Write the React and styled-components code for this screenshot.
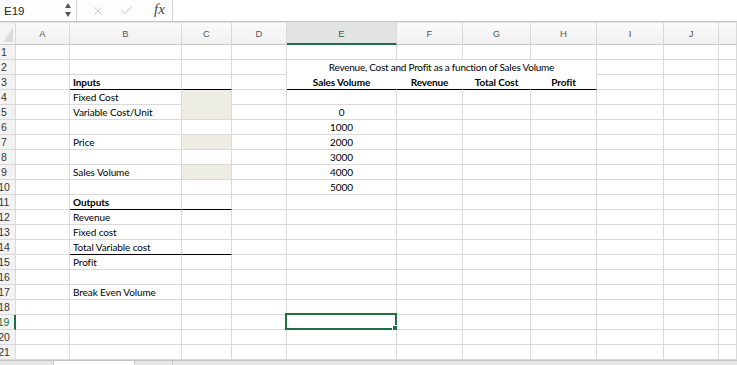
import React from "react";
import styled, { createGlobalStyle, css } from "styled-components";
import { X, Check } from "lucide-react";

const GREEN = "#1d7044";
const GRID = "#d9d9d9";
const FILL = "#eeede3";

const GlobalStyle = createGlobalStyle`
  html, body {
    margin: 0;
    padding: 0;
    background: #fff;
    overflow: hidden;
  }
  body {
    font-family: "Lato", "Liberation Sans", sans-serif;
  }
`;

const Window = styled.div`
  width: 737px;
  height: 365px;
  display: flex;
  flex-direction: column;
  overflow: hidden;
`;

// formula bar
const FormulaBar = styled.div`
  height: 21px;
  display: flex;
  align-items: stretch;
  background: #fdfdfd;
  border-bottom: 1px solid #c4c4c4;
  box-shadow: 0 1px 0 #e4e4e4;
  margin-bottom: 1px;
`;

const NameBox = styled.div`
  width: 77px;
  display: flex;
  align-items: center;
  justify-content: space-between;
  padding: 0 5px 0 4px;
  box-sizing: border-box;
  font-family: "Liberation Sans", sans-serif;
  font-size: 11.5px;
  color: #222;
  border-right: 1px solid #d4d4d4;
`;

const Spinner = styled.div`
  display: flex;
  flex-direction: column;
  gap: 4px;
  margin-top: -1px;
`;

const Arrow = styled.span`
  width: 0;
  height: 0;
  border-left: 3px solid transparent;
  border-right: 3px solid transparent;
  ${(p) =>
    p.$down
      ? css`border-top: 5px solid #555;`
      : css`border-bottom: 5px solid #555;`}
`;

const Tools = styled.div`
  width: 96px;
  display: flex;
  align-items: center;
  padding-left: 14px;
  box-sizing: border-box;
  gap: 14px;
  color: #c6c6c6;
  border-right: 1px solid #d4d4d4;
`;

const Fx = styled.span`
  font-family: "Liberation Serif", serif;
  font-style: italic;
  font-size: 15px;
  color: #444;
  margin-left: 6px;
  margin-top: -3px;
`;

const FormulaInput = styled.div`
  flex: 1;
  background: #fff;
`;

// sheet grid
const Sheet = styled.div`
  display: grid;
  grid-template-columns: 16px 54px 112px 50px 55px 110px 66px 68px 66px 67px 55px 1fr;
  grid-auto-rows: 15px;
  grid-template-rows: 22px;
`;

const Corner = styled.div`
  background: #f5f5f5;
  border-right: 1px solid ${GRID};
  border-bottom: 1px solid #c8c8c8;
  box-sizing: border-box;
  position: relative;
  &::after {
    content: "";
    position: absolute;
    right: 2px;
    bottom: 2px;
    border-left: 10px solid transparent;
    border-bottom: 15px solid #dcdcdc;
  }
`;

const ColHead = styled.div`
  display: flex;
  align-items: center;
  justify-content: center;
  box-sizing: border-box;
  font-family: "Liberation Sans", sans-serif;
  font-size: 9.5px;
  color: ${(p) => (p.$active ? GREEN : "#555")};
  background: ${(p) => (p.$active ? "#e3e3e3" : "linear-gradient(#fafafa, #f1f1f1)")};
  border-right: 1px solid ${GRID};
  border-bottom: ${(p) => (p.$active ? `2px solid ${GREEN}` : "1px solid #c8c8c8")};
`;

const RowHead = styled.div`
  display: flex;
  align-items: center;
  justify-content: center;
  padding-right: 7px;
  box-sizing: border-box;
  font-family: "Liberation Sans", sans-serif;
  font-size: 10.5px;
  color: ${(p) => (p.$active ? GREEN : "#333")};
  background: #f3f3f3;
  border-right: ${(p) => (p.$active ? `2px solid ${GREEN}` : `1px solid ${GRID}`)};
  border-bottom: 1px solid ${GRID};
  overflow: visible;
  white-space: nowrap;
`;

const Cell = styled.div`
  position: relative;
  display: flex;
  align-items: center;
  justify-content: ${(p) => (p.$align === "center" ? "center" : "flex-start")};
  padding: 0 3px;
  box-sizing: border-box;
  font-size: 10px;
  letter-spacing: ${(p) => (p.$span ? "-0.25px" : "-0.1px")};
  font-weight: ${(p) => (p.$bold ? 700 : 400)};
  color: #000;
  white-space: nowrap;
  background: ${(p) => (p.$fill ? FILL : "#fff")};
  border-right: 1px solid ${(p) => (p.$open ? "#fff" : GRID)};
  border-bottom: 1px solid
    ${(p) => (p.$rule ? "#000" : p.$join ? FILL : p.$openBottom ? "#fff" : GRID)};
  grid-column: ${(p) => (p.$span ? `span ${p.$span}` : "auto")};
`;

const Selection = styled.div`
  position: absolute;
  left: -2px;
  top: -2px;
  right: -1px;
  bottom: -1px;
  border: 2px solid ${GREEN};
  pointer-events: none;
  &::after {
    content: "";
    position: absolute;
    right: -4px;
    bottom: -4px;
    width: 5px;
    height: 5px;
    background: ${GREEN};
    border: 1px solid #fff;
  }
`;

const SheetTabs = styled.div`
  flex: 1;
  display: flex;
  background: #e6e6e6;
  border-top: 1px solid #c4c4c4;
`;

const Tab = styled.div`
  width: ${(p) => p.$w}px;
  background: ${(p) => (p.$active ? "#fff" : "transparent")};
  border-right: 1px solid #c8c8c8;
`;

const COLS = ["A", "B", "C", "D", "E", "F", "G", "H", "I", "J", "K"];

const CELLS = {
  2: {
    E: {
      text: "Revenue, Cost and Profit as a function of Sales Volume",
      span: 4,
      align: "center",
      openBottom: true,
    },
  },
  3: {
    B: { text: "Inputs", bold: true, rule: true },
    C: { rule: true },
    E: { text: "Sales Volume", bold: true, align: "center", rule: true, open: true },
    F: { text: "Revenue", bold: true, align: "center", rule: true, open: true },
    G: { text: "Total Cost", bold: true, align: "center", rule: true, open: true },
    H: { text: "Profit", bold: true, align: "center", rule: true },
  },
  4: { B: { text: "Fixed Cost" }, C: { fill: true, join: true } },
  5: { B: { text: "Variable Cost/Unit" }, C: { fill: true }, E: { text: "0", align: "center" } },
  6: { E: { text: "1000", align: "center" } },
  7: { B: { text: "Price" }, C: { fill: true }, E: { text: "2000", align: "center" } },
  8: { E: { text: "3000", align: "center" } },
  9: { B: { text: "Sales Volume" }, C: { fill: true }, E: { text: "4000", align: "center" } },
  10: { E: { text: "5000", align: "center" } },
  11: { B: { text: "Outputs", bold: true, rule: true }, C: { rule: true } },
  12: { B: { text: "Revenue" } },
  13: { B: { text: "Fixed cost" } },
  14: { B: { text: "Total Variable cost", rule: true }, C: { rule: true } },
  15: { B: { text: "Profit" } },
  17: { B: { text: "Break Even Volume" } },
  19: { E: { selected: true } },
};

const ACTIVE_ROW = 19;
const ACTIVE_COL = "E";

function SheetRow({ n }) {
  const spec = CELLS[n] || {};
  const out = [];
  let skip = 0;
  COLS.forEach((c) => {
    if (skip > 0) {
      skip -= 1;
      return;
    }
    const s = spec[c] || {};
    if (s.span) skip = s.span - 1;
    out.push(
      <Cell
        key={c}
        $align={s.align}
        $bold={s.bold}
        $fill={s.fill}
        $rule={s.rule}
        $join={s.join}
        $open={s.open}
        $openBottom={s.openBottom}
        $span={s.span}
      >
        {s.text}
        {s.selected && <Selection />}
      </Cell>
    );
  });
  return (
    <>
      <RowHead $active={n === ACTIVE_ROW}>{n}</RowHead>
      {out}
    </>
  );
}

export default function App() {
  const rows = Array.from({ length: 21 }, (_, i) => i + 1);
  return (
    <Window>
      <GlobalStyle />
      <FormulaBar>
        <NameBox>
          E19
          <Spinner>
            <Arrow />
            <Arrow $down />
          </Spinner>
        </NameBox>
        <Tools>
          <X size={14} strokeWidth={1.6} />
          <Check size={15} strokeWidth={1.6} />
          <Fx>fx</Fx>
        </Tools>
        <FormulaInput />
      </FormulaBar>
      <Sheet>
        <Corner />
        {COLS.map((c) => (
          <ColHead key={c} $active={c === ACTIVE_COL}>
            {c === "K" ? "" : c}
          </ColHead>
        ))}
        {rows.map((n) => (
          <SheetRow key={n} n={n} />
        ))}
      </Sheet>
      <SheetTabs>
        <Tab $w={53} />
        <Tab $w={80} $active />
        <Tab $w={37} />
      </SheetTabs>
    </Window>
  );
}
